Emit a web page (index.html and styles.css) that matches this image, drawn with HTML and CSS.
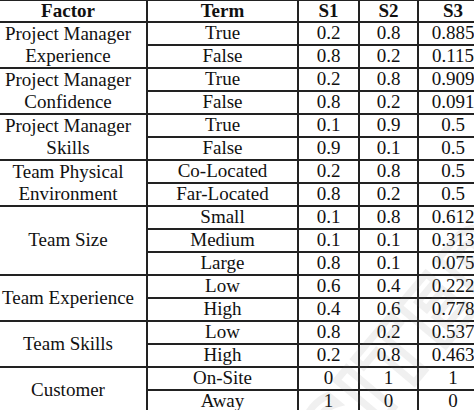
FILE: index.html
```html
<!DOCTYPE html>
<html>
<head>
<meta charset="utf-8">
<link rel="stylesheet" href="styles.css">
</head>
<body>
<div class="frame">
  <table class="grid">
    <colgroup>
      <col class="c-factor"><col class="c-term"><col class="c-s1"><col class="c-s2"><col class="c-s3">
    </colgroup>
    <thead>
      <tr><th>Factor</th><th>Term</th><th>S1</th><th>S2</th><th>S3</th></tr>
    </thead>
    <tbody>
      <tr><td rowspan="2" class="factor">Project Manager<br>Experience</td><td>True</td><td>0.2</td><td>0.8</td><td>0.885</td></tr>
      <tr><td>False</td><td>0.8</td><td>0.2</td><td>0.115</td></tr>
      <tr><td rowspan="2" class="factor">Project Manager<br>Confidence</td><td>True</td><td>0.2</td><td>0.8</td><td>0.909</td></tr>
      <tr><td>False</td><td>0.8</td><td>0.2</td><td>0.091</td></tr>
      <tr><td rowspan="2" class="factor">Project Manager<br>Skills</td><td>True</td><td>0.1</td><td>0.9</td><td>0.5</td></tr>
      <tr><td>False</td><td>0.9</td><td>0.1</td><td>0.5</td></tr>
      <tr><td rowspan="2" class="factor">Team Physical<br>Environment</td><td>Co-Located</td><td>0.2</td><td>0.8</td><td>0.5</td></tr>
      <tr><td>Far-Located</td><td>0.8</td><td>0.2</td><td>0.5</td></tr>
      <tr><td rowspan="3" class="factor">Team Size</td><td>Small</td><td>0.1</td><td>0.8</td><td>0.612</td></tr>
      <tr><td>Medium</td><td>0.1</td><td>0.1</td><td>0.313</td></tr>
      <tr><td>Large</td><td>0.8</td><td>0.1</td><td>0.075</td></tr>
      <tr><td rowspan="2" class="factor">Team Experience</td><td>Low</td><td>0.6</td><td>0.4</td><td>0.222</td></tr>
      <tr><td>High</td><td>0.4</td><td>0.6</td><td>0.778</td></tr>
      <tr><td rowspan="2" class="factor">Team Skills</td><td>Low</td><td>0.8</td><td>0.2</td><td>0.537</td></tr>
      <tr><td>High</td><td>0.2</td><td>0.8</td><td>0.463</td></tr>
      <tr><td rowspan="2" class="factor">Customer</td><td>On-Site</td><td>0</td><td>1</td><td>1</td></tr>
      <tr><td>Away</td><td>1</td><td>0</td><td>0</td></tr>
    </tbody>
  </table>
  <div class="watermark" aria-hidden="true">SCITEPRESS</div>
</div>
</body>
</html>
```
FILE: styles.css
```css
html, body {
  margin: 0;
  padding: 0;
  background: #fff;
}
.frame {
  position: relative;
  width: 474px;
  height: 410px;
  overflow: hidden;
  background: #fff;
}
.grid {
  border-collapse: collapse;
  table-layout: fixed;
  width: 499px;
  margin: -1px 0 0 -12px;
  font-family: "Liberation Serif", "Times New Roman", serif;
  font-size: 19px;
  line-height: 20px;
  color: #111;
}
.c-factor { width: 158px; }
.c-term { width: 151px; }
.c-s1 { width: 61px; }
.c-s2 { width: 59px; }
.c-s3 { width: 70px; }
.grid th, .grid td {
  border: 2px solid #222;
  padding: 0;
  height: 21px;
  text-align: center;
  vertical-align: middle;
  white-space: nowrap;
}
.grid th {
  font-weight: bold;
  height: 19.5px;
  line-height: 19.5px;
}
.grid td.factor {
  line-height: 21.5px;
}
.watermark {
  position: absolute;
  left: 235px;
  top: 475px;
  font-family: "DejaVu Sans", sans-serif;
  font-weight: bold;
  font-size: 84px;
  color: transparent;
  -webkit-text-stroke: 7px rgba(120, 120, 120, 0.11);
  transform: rotate(-50deg);
  transform-origin: left top;
  pointer-events: none;
  letter-spacing: 4px;
}
```
